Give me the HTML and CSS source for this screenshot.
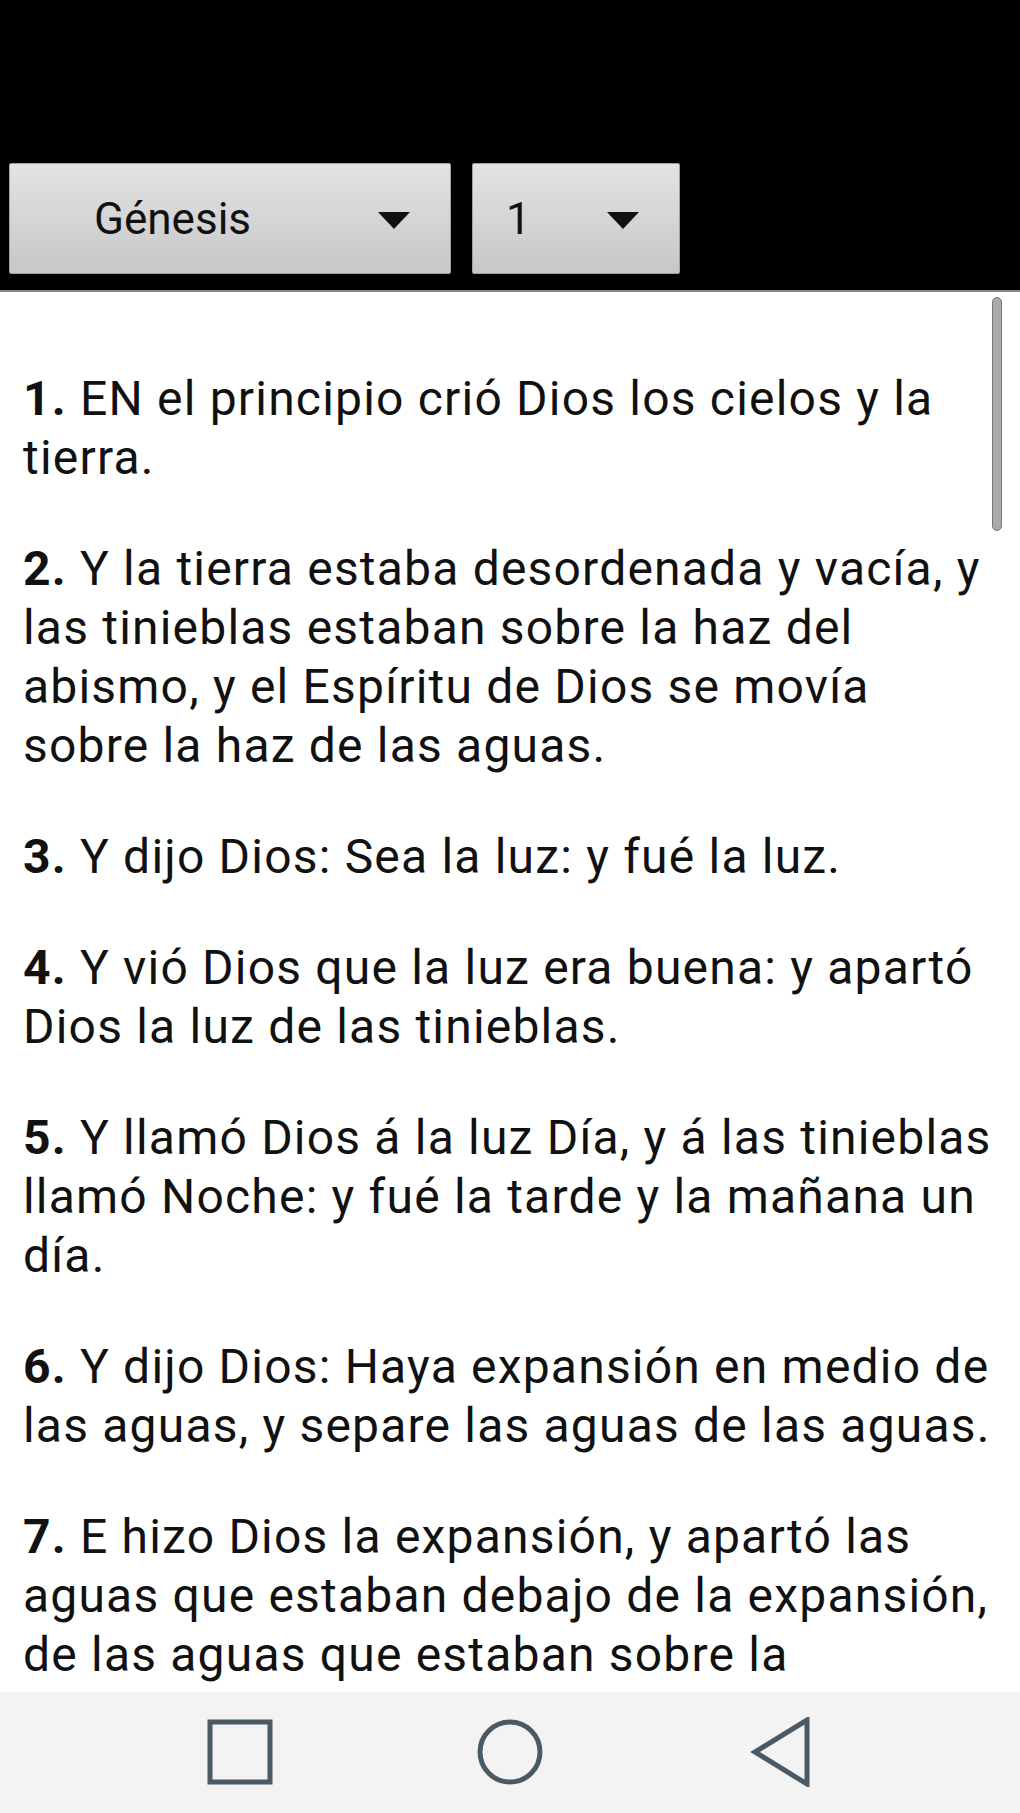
FILE: index.html
```html
<!DOCTYPE html>
<html lang="es">
<head>
<meta charset="utf-8">
<title>Génesis 1</title>
<link rel="stylesheet" href="styles.css">
</head>
<body>
<div class="screen">
  <header class="top">
    <div class="spinner spinner-book">
      <span class="spinner-label">Génesis</span>
      <span class="caret"></span>
    </div>
    <div class="spinner spinner-chapter">
      <span class="spinner-label">1</span>
      <span class="caret"></span>
    </div>
  </header>
  <main class="content">
    <div class="scrollbar"></div>
    <p class="verse"><b>1.</b> EN el principio crió Dios los cielos y la tierra.</p>
    <p class="verse"><b>2.</b> Y la tierra estaba desordenada y vacía, y las tinieblas estaban sobre la haz del abismo, y el Espíritu de Dios se movía sobre la haz de las aguas.</p>
    <p class="verse"><b>3.</b> Y dijo Dios: Sea la luz: y fué la luz.</p>
    <p class="verse"><b>4.</b> Y vió Dios que la luz era buena: y apartó Dios la luz de las tinieblas.</p>
    <p class="verse"><b>5.</b> Y llamó Dios á la luz Día, y á las tinieblas llamó Noche: y fué la tarde y la mañana un día.</p>
    <p class="verse"><b>6.</b> Y dijo Dios: Haya expansión en medio de las aguas, y separe las aguas de las aguas.</p>
    <p class="verse"><b>7.</b> E hizo Dios la expansión, y apartó las aguas que estaban debajo de la expansión, de las aguas que estaban sobre la expansión: y fué así.</p>
  </main>
  <nav class="navbar">
    <svg class="nav-icon" viewBox="0 0 70 70" width="70" height="70">
      <rect x="5" y="5" width="60" height="60" fill="none" stroke="#4a5a64" stroke-width="5"/>
    </svg>
    <svg class="nav-icon" viewBox="0 0 70 70" width="70" height="70">
      <circle cx="35" cy="35" r="30" fill="none" stroke="#4a5a64" stroke-width="5"/>
    </svg>
    <svg class="nav-icon" viewBox="0 0 70 70" width="70" height="70">
      <path d="M62 3 L62 67 L10 35 Z" fill="none" stroke="#4a5a64" stroke-width="5" stroke-linejoin="miter"/>
    </svg>
  </nav>
</div>
</body>
</html>
```

FILE: styles.css
```css
html, body {
  margin: 0;
  padding: 0;
  background: #fff;
}

.screen {
  width: 1020px;
  height: 1813px;
  display: flex;
  flex-direction: column;
  overflow: hidden;
  font-family: Roboto, "Noto Sans", "Liberation Sans", sans-serif;
}

.top {
  height: 292px;
  box-sizing: border-box;
  background: #000;
  border-bottom: 2px solid #8a8a8a;
  padding: 163px 0 0 9px;
  display: flex;
  align-items: flex-start;
  gap: 21px;
  flex: none;
}

.spinner {
  height: 111px;
  box-sizing: border-box;
  background: linear-gradient(#e3e3e3, #c7c7c7);
  border: 1px solid #a0a0a0;
  border-radius: 2px;
  display: flex;
  align-items: center;
  color: #111;
  font-size: 44px;
}

.spinner-book {
  width: 442px;
  padding-left: 84px;
}

.spinner-chapter {
  width: 208px;
  padding-left: 33px;
}

.spinner-label {
  flex: 1;
}

.caret {
  width: 0;
  height: 0;
  border-left: 16px solid transparent;
  border-right: 16px solid transparent;
  border-top: 17px solid #111;
  margin-right: 40px;
  margin-top: 4px;
}

.content {
  position: relative;
  flex: 1;
  overflow: hidden;
  padding: 77px 14px 0 23px;
  color: #111;
  font-size: 48px;
  letter-spacing: 1.2px;
  line-height: 59px;
}

.verse {
  margin: 0 0 52px 0;
}

.verse b {
  font-weight: 700;
}

.scrollbar {
  position: absolute;
  top: 5px;
  right: 18px;
  width: 10px;
  height: 234px;
  box-sizing: border-box;
  border-radius: 5px;
  background: #aaa;
  border: 1px solid #777;
}

.navbar {
  height: 121px;
  flex: none;
  background: #f3f3f3;
  display: flex;
  justify-content: center;
  align-items: center;
  gap: 200px;
  padding-bottom: 2px;
  box-sizing: border-box;
}

.nav-icon {
  display: block;
}
```
